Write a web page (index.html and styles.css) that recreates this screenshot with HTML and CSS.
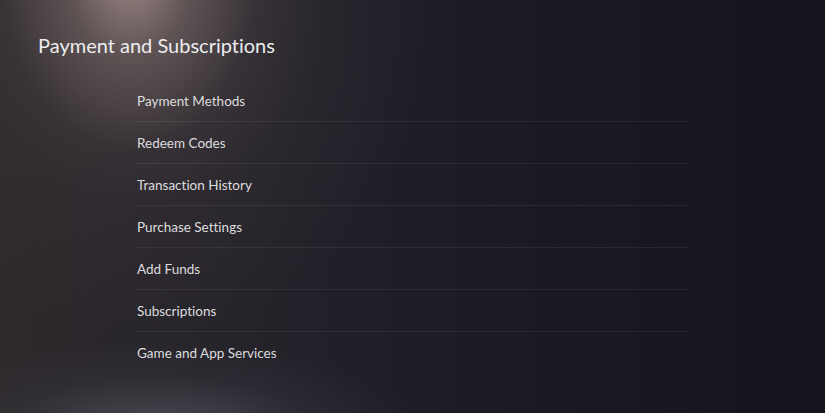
FILE: index.html
```html
<!DOCTYPE html>
<html lang="en">
<head>
    <meta charset="UTF-8">
    <meta name="viewport" content="width=device-width, initial-scale=1.0">
    <title>Payment and Subscriptions</title>
    <link rel="stylesheet" href="styles.css">
</head>
<body>
    <div class="screen">
        <h1 class="title">Payment and Subscriptions</h1>
        <ul class="menu">
            <li class="item">Payment Methods</li>
            <li class="item">Redeem Codes</li>
            <li class="item">Transaction History</li>
            <li class="item">Purchase Settings</li>
            <li class="item">Add Funds</li>
            <li class="item">Subscriptions</li>
            <li class="item last">Game and App Services</li>
        </ul>
    </div>
</body>
</html>
```

FILE: styles.css
```css
html, body {
    margin: 0;
    padding: 0;
    height: 100%;
}
body {
    font-family: Lato, 'Open Sans', Arial, sans-serif;
    font-variant-ligatures: none;
    color: #e4e4e6;
    background: #15161f;
    overflow: hidden;
}
.screen {
    width: 825px;
    height: 413px;
    box-sizing: border-box;
    padding: 28px 0 0 38px;
    background:
        radial-gradient(ellipse 130px 190px at 130px -40px, rgba(190, 165, 160, 0.75), rgba(145, 125, 122, 0.35) 50%, rgba(90, 80, 82, 0) 100%),
        radial-gradient(ellipse 300px 340px at 140px 0px, rgba(110, 96, 96, 0.5), rgba(70, 62, 66, 0.2) 60%, rgba(40, 38, 45, 0) 100%),
        radial-gradient(ellipse 260px 90px at 160px 430px, rgba(95, 100, 110, 0.6), rgba(70, 72, 82, 0.2) 60%, rgba(40, 40, 50, 0) 100%),
        linear-gradient(to right, #2d292c 0%, #25232a 30%, #1a1b24 60%, #13141d 100%);
}
.title {
    margin: 0;
    font-size: 20px;
    font-weight: 400;
    line-height: 34px;
    color: #ececee;
}
.menu {
    list-style: none;
    margin: 18px 0 0 99px;
    padding: 0;
    width: 551px;
}
.item {
    height: 41px;
    line-height: 42px;
    font-size: 13.5px;
    border-bottom: 1px solid rgba(255, 255, 255, 0.07);
    color: #dcdcde;
}
.item.last {
    border-bottom: 0;
}
```
